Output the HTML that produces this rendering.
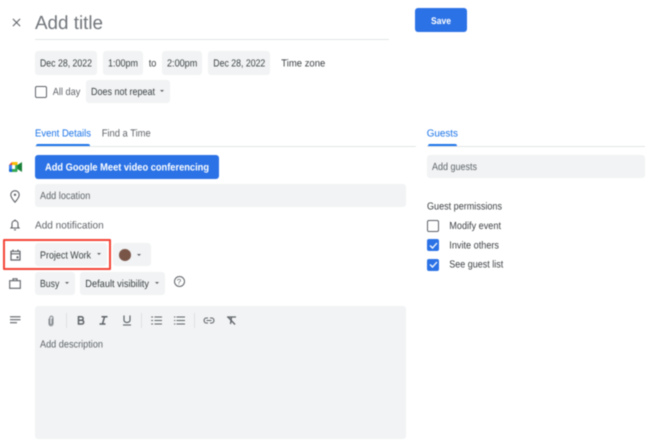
<!DOCTYPE html>
<html><head><meta charset="utf-8">
<style>
html,body{margin:0;padding:0;background:#fff}
#p{position:relative;width:650px;height:445px;overflow:hidden;font-family:"Liberation Sans",Arial,sans-serif;color:#3c4043;filter:blur(.4px)}
#p>*{position:absolute}
.c{background:#f1f3f4;border-radius:3px}
.a{width:0;height:0;border-left:2.5px solid transparent;border-right:2.5px solid transparent;border-top:2.5px solid #5f6368}
.l{background:#e2e4e6;height:1px}
.v{background:#dfe1e4;width:1px;height:15px;top:313px}
.b{width:9.500px;height:9.500px;border:1.300px solid #5f6368;border-radius:2px}
.k{width:12px;height:12px;background:#2b72e6;border-radius:2px}
svg{overflow:visible}
#x text{font-size:10.300px;fill:#3c4043;text-rendering:geometricPrecision}
#x .g{fill:#5f6368}
#x .h{fill:#1a73e8}
#x .w{fill:#fff;font-weight:bold}
</style></head><body><div id="p">
<svg style="left:12px;top:17.500px" width="9" height="9" viewBox="0 0 10 10"><path d="M1 1L9 9M9 1L1 9" stroke="#5f6368" stroke-width="1.200" fill="none"/></svg>
<div class="l" style="left:35px;top:39px;width:354px"></div>
<div style="left:415px;top:8px;width:52px;height:24px;background:#2b72e6;border-radius:3px"></div>

<div class="c" style="left:35px;top:51px;width:62px;height:23.500px"></div>
<div class="c" style="left:103px;top:51px;width:40px;height:23.500px"></div>
<div class="c" style="left:162px;top:51px;width:40px;height:23.500px"></div>
<div class="c" style="left:208px;top:51px;width:62px;height:23.500px"></div>

<div class="b" style="left:35px;top:86px"></div>
<div class="c" style="left:86px;top:80px;width:84px;height:23px"></div>
<div class="a" style="left:160px;top:90px"></div>

<div class="l" style="left:35px;top:146px;width:381px"></div>
<div style="left:36px;top:144px;width:54px;height:2px;background:#1a73e8;border-radius:2px 2px 0 0"></div>
<div class="l" style="left:427px;top:146px;width:218px"></div>
<div style="left:428px;top:144px;width:29px;height:2px;background:#1a73e8;border-radius:2px 2px 0 0"></div>

<svg style="left:9px;top:162px" width="13" height="10" viewBox="0 0 13 10"><path d="M0 3L3 0H3V3Z" fill="#ea4335"/><path d="M3 0H8.500V3H3Z" fill="#fbbc04"/><path d="M0 3H3V7H0Z" fill="#4285f4"/><path d="M0 7H3V10H1Q0 10 0 9Z" fill="#1967d2"/><path d="M3 7H8.500V9Q8.500 10 7.500 10H3Z" fill="#34a853"/><path d="M8.500 3V7L6.500 5Z M8.500 3L13 0V10L8.500 7Z" fill="#188038"/><path d="M6 3H8.500V7H6Z" fill="#34a853"/><path d="M3 3H6.200V7H3Z" fill="#fff"/></svg>
<div style="left:35px;top:155px;width:184px;height:24px;background:#2b72e6;border-radius:3px"></div>

<svg style="left:10px;top:190px" width="10" height="13" viewBox="0 0 10 13"><path d="M5 .7C2.600 .7 .8 2.500 .8 4.800 .8 7.600 5 12.200 5 12.200S9.200 7.600 9.200 4.800C9.200 2.500 7.400 .7 5 .7Z" fill="none" stroke="#5f6368" stroke-width="1.100"/><circle cx="5" cy="4.800" r="1.200" fill="#5f6368"/></svg>
<div class="c" style="left:35px;top:184px;width:371px;height:23px"></div>

<svg style="left:10px;top:219px" width="10" height="12" viewBox="0 0 10 12"><path d="M1 9H9L8 7.800V4.800C8 3 6.800 1.700 5 1.700S2 3 2 4.800V7.800ZM5 .5V1.700M4 10.800H6" fill="none" stroke="#5f6368" stroke-width="1.100"/></svg>

<div style="left:3.300px;top:239.300px;width:103.400px;height:26.700px;border:2px solid #f44336;border-radius:1px"></div>
<svg style="left:10px;top:249px" width="11" height="12" viewBox="0 0 11 12"><path d="M1 2.300H10V11H1ZM1 4.800H10M3 .6V2.300M8 .6V2.300" fill="none" stroke="#5f6368" stroke-width="1.200"/><rect x="6.500" y="7.300" width="2" height="2" fill="#5f6368"/></svg>
<div class="c" style="left:35px;top:243px;width:72px;height:23px"></div>
<div class="a" style="left:97px;top:253px"></div>
<div class="c" style="left:112.500px;top:243px;width:38.500px;height:23px"></div>
<div style="left:119.300px;top:249.300px;width:11.700px;height:11.700px;border-radius:50%;background:#795548"></div>
<div class="a" style="left:136.700px;top:253.500px"></div>

<svg style="left:9px;top:278px" width="12" height="11" viewBox="0 0 12 11"><path d="M.7 2.700H11.300V10.300H.7ZM4 2.700V.8H8V2.700" fill="none" stroke="#5f6368" stroke-width="1.100"/></svg>
<div class="c" style="left:35px;top:272px;width:40px;height:23px"></div>
<div class="a" style="left:64.500px;top:282px"></div>
<div class="c" style="left:80px;top:272px;width:85px;height:23px"></div>
<div class="a" style="left:155px;top:282px"></div>
<div style="left:174px;top:275.500px;width:9px;height:9px;border:1px solid #5f6368;border-radius:50%"></div>

<svg style="left:10px;top:316px" width="11" height="8" viewBox="0 0 11 8"><path d="M0 .8H10.500M0 3.700H10.500M0 6.700H7" stroke="#5f6368" stroke-width="1.100" fill="none"/></svg>
<div class="c" style="left:35px;top:306px;width:371px;height:133px"></div>
<svg style="left:47px;top:315px" width="8" height="12" viewBox="0 0 8 12"><path d="M2 3.500V8.500C2 11.500 6 11.500 6 8.500V3C6 .6 2.800 .6 2.800 3V8.500C2.800 9.700 5 9.700 5 8.500V3.500" fill="none" stroke="#8a8e93" stroke-width="1.100"/></svg>
<div class="v" style="left:65.500px"></div>
<svg style="left:77px;top:316px" width="8" height="9" viewBox="0 0 8 9"><path d="M1.500 .8H4.500C6.700 .8 6.700 4.200 4.500 4.200H1.500ZM1.500 4.200H5C7.200 4.200 7.200 8 5 8H1.500Z" fill="none" stroke="#5f6368" stroke-width="1.500"/></svg>
<svg style="left:99px;top:316px" width="9" height="9" viewBox="0 0 9 9"><path d="M2.500 .8H8.500M.5 8H6.500M5.500 .8L3.500 8" fill="none" stroke="#5f6368" stroke-width="1.500"/></svg>
<svg style="left:122px;top:315px" width="10" height="11" viewBox="0 0 10 11"><path d="M2 .5V5C2 8.300 8 8.300 8 5V.5" fill="none" stroke="#5f6368" stroke-width="1.200"/><path d="M1 10H9" stroke="#5f6368" stroke-width="1.100"/></svg>
<div class="v" style="left:141px"></div>
<svg style="left:151px;top:316px" width="11" height="9" viewBox="0 0 11 9"><path d="M3.500 1H11M3.500 4.500H11M3.500 8H11M.2 1H2M.2 4.500H2M.2 8H2" stroke="#5f6368" stroke-width="1.100" fill="none"/></svg>
<svg style="left:174px;top:316px" width="11" height="9" viewBox="0 0 11 9"><path d="M2.500 1H11M2.500 4.500H11M2.500 8H11M0 1H1.300M0 4.500H1.300M0 8H1.300" stroke="#5f6368" stroke-width="1.100" fill="none"/></svg>
<div class="v" style="left:194px"></div>
<svg style="left:203px;top:317px" width="12" height="7" viewBox="0 0 12 7"><path d="M5 1H3.200C.4 1 .4 6 3.200 6H5M7 1H8.800C11.600 1 11.600 6 8.800 6H7M3.500 3.500H8.500" stroke="#5f6368" stroke-width="1.100" fill="none"/></svg>
<svg style="left:226px;top:316px" width="11" height="9" viewBox="0 0 11 9"><path d="M1 1H10M5.500 1L4.500 8M2 1L9 8.500" stroke="#5f6368" stroke-width="1.300" fill="none"/></svg>

<div class="c" style="left:427px;top:155px;width:218px;height:23px"></div>
<div class="b" style="left:427px;top:220px"></div>
<div class="k" style="left:427px;top:239px"></div>
<svg style="left:428.500px;top:240.500px" width="9" height="9" viewBox="0 0 9 9"><path d="M1 4.500L3.500 7L8 2" stroke="#fff" stroke-width="1.300" fill="none"/></svg>
<div class="k" style="left:427px;top:258.500px"></div>
<svg style="left:428.500px;top:260px" width="9" height="9" viewBox="0 0 9 9"><path d="M1 4.500L3.500 7L8 2" stroke="#fff" stroke-width="1.300" fill="none"/></svg>

<svg id="x" style="left:0;top:0" width="650" height="445" viewBox="0 0 650 445">
<text x="35" y="29" textLength="68" lengthAdjust="spacingAndGlyphs" style="font-size:19px;fill:#70757a">Add title</text>
<text x="431" y="24" textLength="20" lengthAdjust="spacingAndGlyphs" class="w" style="font-size:9.600px">Save</text>
<text x="40" y="66.700" textLength="52" lengthAdjust="spacingAndGlyphs">Dec 28, 2022</text>
<text x="108" y="66.700" textLength="30" lengthAdjust="spacingAndGlyphs">1:00pm</text>
<text x="148.700" y="66.700" textLength="7.600" lengthAdjust="spacingAndGlyphs">to</text>
<text x="167" y="66.700" textLength="30.300" lengthAdjust="spacingAndGlyphs">2:00pm</text>
<text x="213.300" y="66.700" textLength="52" lengthAdjust="spacingAndGlyphs">Dec 28, 2022</text>
<text x="281.300" y="66.700" textLength="44" lengthAdjust="spacingAndGlyphs">Time zone</text>
<text x="52.700" y="95" textLength="27.600" lengthAdjust="spacingAndGlyphs" class="g">All day</text>
<text x="91" y="95" textLength="64" lengthAdjust="spacingAndGlyphs">Does not repeat</text>
<text x="35" y="136.500" textLength="56" lengthAdjust="spacingAndGlyphs" class="h">Event Details</text>
<text x="101.700" y="136.500" textLength="49" lengthAdjust="spacingAndGlyphs" class="g">Find a Time</text>
<text x="426.700" y="136.500" textLength="31.300" lengthAdjust="spacingAndGlyphs" class="h">Guests</text>
<text x="45" y="170.500" textLength="164" lengthAdjust="spacingAndGlyphs" class="w">Add Google Meet video conferencing</text>
<text x="40" y="199" textLength="50.300" lengthAdjust="spacingAndGlyphs" class="g">Add location</text>
<text x="35" y="228.700" textLength="68.700" lengthAdjust="spacingAndGlyphs" class="g">Add notification</text>
<text x="40" y="258.300" textLength="51" lengthAdjust="spacingAndGlyphs">Project Work</text>
<text x="40" y="287" textLength="19.300" lengthAdjust="spacingAndGlyphs">Busy</text>
<text x="85.300" y="287" textLength="63.700" lengthAdjust="spacingAndGlyphs">Default visibility</text>
<text x="176.800" y="284.500" class="g" style="font-size:8px">?</text>
<text x="40" y="347.700" textLength="63" lengthAdjust="spacingAndGlyphs" class="g">Add description</text>
<text x="432" y="170" textLength="45" lengthAdjust="spacingAndGlyphs" class="g">Add guests</text>
<text x="427" y="209.300" textLength="75" lengthAdjust="spacingAndGlyphs">Guest permissions</text>
<text x="449.300" y="229" textLength="51.700" lengthAdjust="spacingAndGlyphs">Modify event</text>
<text x="449.300" y="248.300" textLength="49.700" lengthAdjust="spacingAndGlyphs">Invite others</text>
<text x="449.300" y="267.700" textLength="54" lengthAdjust="spacingAndGlyphs">See guest list</text>
</svg>
</div></body></html>
